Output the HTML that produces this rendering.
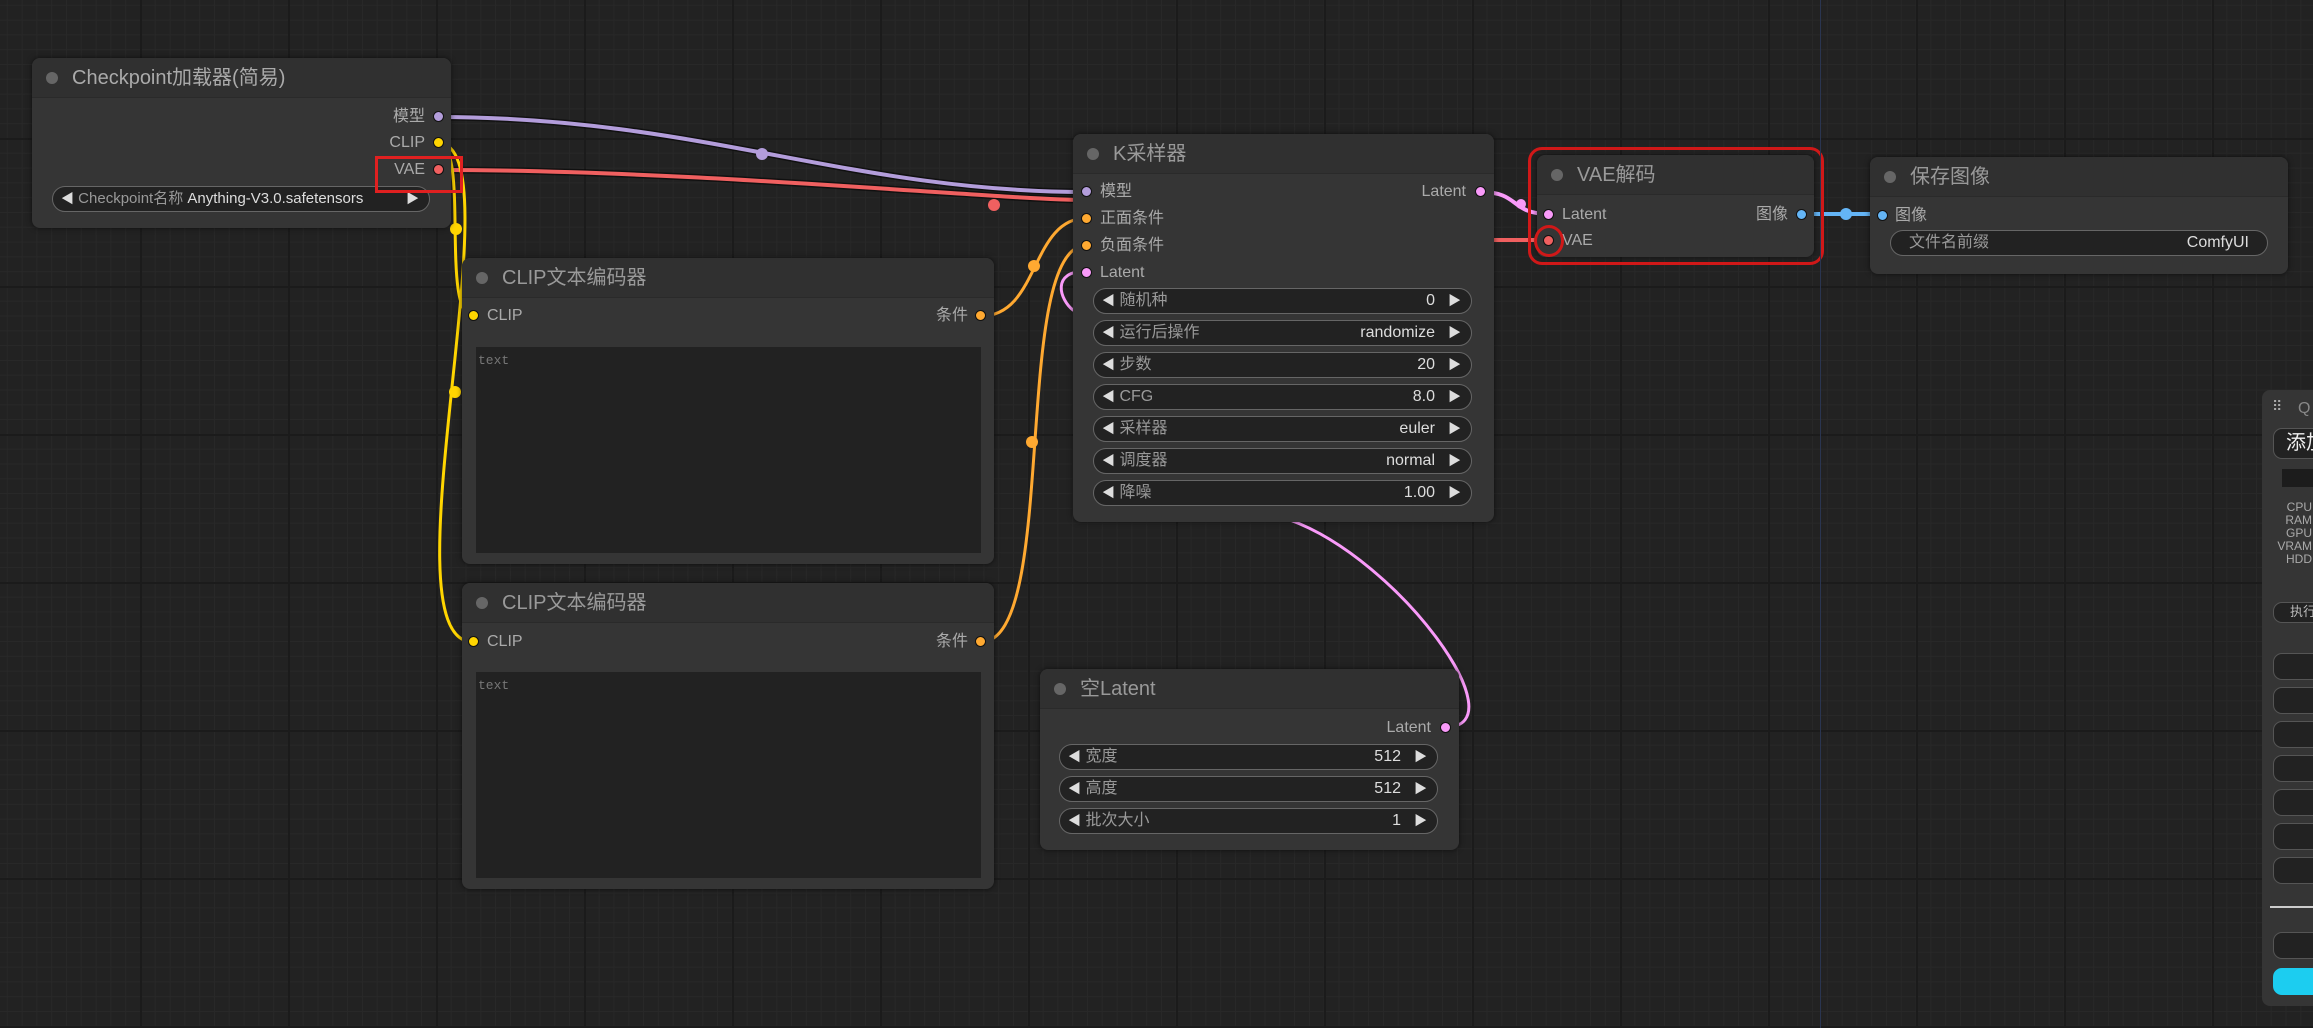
<!DOCTYPE html>
<html><head><meta charset="utf-8"><style>
*{box-sizing:border-box;margin:0;padding:0}
body{width:2313px;height:1028px;overflow:hidden;background:#222;font-family:"Liberation Sans","Noto Sans CJK SC",sans-serif;position:relative;
background-image:linear-gradient(#1b1b1b 2px,transparent 2px),linear-gradient(90deg,#1b1b1b 2px,transparent 2px),linear-gradient(#282828 1px,transparent 1px),linear-gradient(90deg,#282828 1px,transparent 1px);
background-size:148px 148px,148px 148px,14.8px 14.8px,14.8px 14.8px;background-position:-8px -10px}
.node{position:absolute;background:#353535;border-radius:8px;box-shadow:0 0 6px rgba(0,0,0,.6)}
.title{height:40px;background:#303030;border-radius:8px 8px 0 0;border-bottom:1px solid #2a2a2a;color:#999;font-size:20px;line-height:40px;padding-left:40px;position:relative}
.title:before{content:"";position:absolute;left:14px;top:14px;width:12px;height:12px;border-radius:50%;background:#666}
.abs{position:absolute;font-size:16px;color:#aaa;line-height:20px;white-space:nowrap}
.dot{position:absolute;width:11px;height:11px;border-radius:50%;border:1px solid #111}
.w{position:absolute;height:26px;background:#222;border:1.5px solid #666;border-radius:13px;color:#999;font-size:16px;line-height:23px;white-space:nowrap}
.w .l{position:absolute;left:8px}
.w .a{font-size:13px;color:#ddd}
.w .v{position:absolute;right:36px;color:#ddd}
.w .r{position:absolute;right:10px;color:#ddd;font-size:13px}
.ta{position:absolute;background:#222;color:#777;font-family:"Liberation Mono",monospace;font-size:13px;padding:6px 2px}
.pb{position:absolute;left:2273px;width:60px;height:27px;border:1.5px solid #555;border-radius:9px;background:#222}
</style></head><body>
<svg width="2313" height="1028" style="position:absolute;left:0;top:0">
<g fill="none" stroke-linecap="round">
<g stroke="#000" stroke-width="7" opacity=".5">
<path d="M438 117 C700 117 850 192 1087 192"/>
<path d="M438 170 C700 170 1000 200 1087 200"/>
</g>
<path d="M438 117 C700 117 850 192 1087 192" stroke="#b39ddb" stroke-width="4"/>
<path d="M438 170 C700 170 1000 200 1087 200" stroke="#f06060" stroke-width="4"/>
<path d="M1494 240 L1549 240" stroke="#f06060" stroke-width="4"/>
<path d="M438 143 C470 143 440 316 473 316" stroke="#ffd500" stroke-width="3"/>
<path d="M438 143 C520 143 380 642 473 642" stroke="#ffd500" stroke-width="3"/>
<path d="M981 316 C1040 316 1030 218 1087 218" stroke="#ffa931" stroke-width="3"/>
<path d="M981 642 C1060 642 1010 245 1087 245" stroke="#ffa931" stroke-width="3"/>
<path d="M1446 727 C1520 727 1400 560 1290 520" stroke="#f99af9" stroke-width="3"/>
<path d="M1087 271 C1050 271 1060 300 1073 310" stroke="#f99af9" stroke-width="3"/>
<path d="M1481 192 C1520 192 1510 214 1549 214" stroke="#f99af9" stroke-width="4"/>
<path d="M1802 214 L1882 214" stroke="#64b5f6" stroke-width="4"/>
</g>
<g>
<circle cx="762" cy="154" r="6" fill="#b39ddb"/>
<circle cx="994" cy="205" r="6" fill="#f06060"/>
<circle cx="456" cy="229" r="6" fill="#ffd500"/>
<circle cx="455" cy="392" r="6" fill="#ffd500"/>
<circle cx="1034" cy="266" r="6" fill="#ffa931"/>
<circle cx="1032" cy="442" r="6" fill="#ffa931"/>
<circle cx="1846" cy="214" r="6" fill="#64b5f6"/>
<circle cx="1521" cy="204" r="5" fill="#f99af9"/>
</g>
</svg>

<!-- Checkpoint -->
<div class="node" style="left:32px;top:58px;width:419px;height:170px">
<div class="title" style="color:#aaa">Checkpoint加载器(简易)</div>
<div class="abs" style="right:26px;top:49px">模型</div>
<div class="abs" style="right:26px;top:75px">CLIP</div>
<div class="abs" style="right:26px;top:102px">VAE</div>
<div class="dot" style="left:401px;top:53px;background:#b39ddb"></div>
<div class="dot" style="left:401px;top:79px;background:#ffd500"></div>
<div class="dot" style="left:401px;top:106px;background:#f06060"></div>
<div class="w" style="left:20px;top:128px;width:378px;font-size:15px"><span class="l"><span class="a">◀</span> Checkpoint名称 <span style="color:#ddd">Anything-V3.0.safetensors</span></span><span class="r">▶</span></div>
</div>
<div style="position:absolute;left:375px;top:156px;width:88px;height:37px;border:3px solid #e02020"></div>

<!-- CLIP 1 -->
<div class="node" style="left:462px;top:258px;width:532px;height:306px">
<div class="title">CLIP文本编码器</div>
<div class="dot" style="left:6px;top:52px;background:#ffd500"></div>
<div class="abs" style="left:25px;top:48px">CLIP</div>
<div class="abs" style="right:26px;top:48px">条件</div>
<div class="dot" style="left:513px;top:52px;background:#ffa931"></div>
<div class="ta" style="left:14px;top:89px;width:505px;height:206px">text</div>
</div>
<!-- CLIP 2 -->
<div class="node" style="left:462px;top:583px;width:532px;height:306px">
<div class="title">CLIP文本编码器</div>
<div class="dot" style="left:6px;top:53px;background:#ffd500"></div>
<div class="abs" style="left:25px;top:49px">CLIP</div>
<div class="abs" style="right:26px;top:49px">条件</div>
<div class="dot" style="left:513px;top:53px;background:#ffa931"></div>
<div class="ta" style="left:14px;top:89px;width:505px;height:206px">text</div>
</div>

<!-- KSampler -->
<div class="node" style="left:1073px;top:134px;width:421px;height:388px">
<div class="title">K采样器</div>
<div class="dot" style="left:8px;top:52px;background:#b39ddb"></div>
<div class="dot" style="left:8px;top:79px;background:#ffa931"></div>
<div class="dot" style="left:8px;top:106px;background:#ffa931"></div>
<div class="dot" style="left:8px;top:133px;background:#f99af9"></div>
<div class="abs" style="left:27px;top:48px">模型</div>
<div class="abs" style="left:27px;top:75px">正面条件</div>
<div class="abs" style="left:27px;top:102px">负面条件</div>
<div class="abs" style="left:27px;top:129px">Latent</div>
<div class="abs" style="right:28px;top:48px">Latent</div>
<div class="dot" style="left:402px;top:52px;background:#f99af9"></div>
<div class="w" style="left:20px;top:154px;width:379px"><span class="l"><span class="a">◀</span> 随机种</span><span class="v">0</span><span class="r">▶</span></div>
<div class="w" style="left:20px;top:186px;width:379px"><span class="l"><span class="a">◀</span> 运行后操作</span><span class="v">randomize</span><span class="r">▶</span></div>
<div class="w" style="left:20px;top:218px;width:379px"><span class="l"><span class="a">◀</span> 步数</span><span class="v">20</span><span class="r">▶</span></div>
<div class="w" style="left:20px;top:250px;width:379px"><span class="l"><span class="a">◀</span> CFG</span><span class="v">8.0</span><span class="r">▶</span></div>
<div class="w" style="left:20px;top:282px;width:379px"><span class="l"><span class="a">◀</span> 采样器</span><span class="v">euler</span><span class="r">▶</span></div>
<div class="w" style="left:20px;top:314px;width:379px"><span class="l"><span class="a">◀</span> 调度器</span><span class="v">normal</span><span class="r">▶</span></div>
<div class="w" style="left:20px;top:346px;width:379px"><span class="l"><span class="a">◀</span> 降噪</span><span class="v">1.00</span><span class="r">▶</span></div>
</div>

<!-- VAE decode -->
<div class="node" style="left:1537px;top:155px;width:277px;height:102px">
<div class="title">VAE解码</div>
<div class="dot" style="left:6px;top:54px;background:#f99af9"></div>
<div class="dot" style="left:6px;top:80px;background:#f06060"></div>
<div class="abs" style="left:25px;top:50px">Latent</div>
<div class="abs" style="left:25px;top:76px">VAE</div>
<div class="abs" style="right:26px;top:50px">图像</div>
<div class="dot" style="left:259px;top:54px;background:#64b5f6"></div>
</div>
<div style="position:absolute;left:1528px;top:147px;width:296px;height:118px;border:3px solid #d01818;border-radius:14px"></div>
<div style="position:absolute;left:1534px;top:225px;width:30px;height:32px;border:3px solid #d01818;border-radius:50%"></div>

<!-- Save image -->
<div class="node" style="left:1870px;top:157px;width:418px;height:117px">
<div class="title">保存图像</div>
<div class="dot" style="left:7px;top:53px;background:#64b5f6"></div>
<div class="abs" style="left:25px;top:49px">图像</div>
<div class="w" style="left:20px;top:73px;width:378px"><span class="l" style="left:18px">文件名前缀</span><span class="r" style="right:18px;font-size:16px">ComfyUI</span></div>
</div>

<!-- Empty latent -->
<div class="node" style="left:1040px;top:669px;width:419px;height:181px">
<div class="title">空Latent</div>
<div class="abs" style="right:28px;top:49px">Latent</div>
<div class="dot" style="left:400px;top:53px;background:#f99af9"></div>
<div class="w" style="left:19px;top:75px;width:379px"><span class="l"><span class="a">◀</span> 宽度</span><span class="v">512</span><span class="r">▶</span></div>
<div class="w" style="left:19px;top:107px;width:379px"><span class="l"><span class="a">◀</span> 高度</span><span class="v">512</span><span class="r">▶</span></div>
<div class="w" style="left:19px;top:139px;width:379px"><span class="l"><span class="a">◀</span> 批次大小</span><span class="v">1</span><span class="r">▶</span></div>
</div>

<!-- right panel -->
<div style="position:absolute;left:1820px;top:0;width:1px;height:1028px;background:#2a3550"></div>
<div style="position:absolute;left:2262px;top:390px;width:60px;height:616px;background:#353535;border-radius:8px 0 0 8px">
<div style="position:absolute;left:10px;top:8px;color:#aaa;font-size:14px">⠿</div>
<div style="position:absolute;left:36px;top:10px;color:#888;font-size:16px">Q</div>
<div style="position:absolute;left:11px;top:38px;width:60px;height:31px;border:1.5px solid #555;border-radius:9px;background:#222;color:#eee;font-size:20px;line-height:28px;padding-left:12px">添加</div>
<div style="position:absolute;left:20px;top:79px;width:40px;height:18px;background:#1c1c1c"></div>
<div style="position:absolute;left:10px;top:111px;color:#aaa;font-size:12px;line-height:13px;text-align:right;width:40px">CPU<br>RAM<br>GPU<br>VRAM<br>HDD</div>
<div style="position:absolute;left:11px;top:212px;width:60px;height:21px;border:1.5px solid #555;border-radius:9px;background:#222;color:#bbb;font-size:13px;line-height:18px;padding-left:16px">执行</div>
</div>
<div class="pb" style="top:653px"></div>
<div class="pb" style="top:687px"></div>
<div class="pb" style="top:721px"></div>
<div class="pb" style="top:755px"></div>
<div class="pb" style="top:789px"></div>
<div class="pb" style="top:823px"></div>
<div class="pb" style="top:857px"></div>
<div style="position:absolute;left:2270px;top:906px;width:43px;height:2px;background:#ccc"></div>
<div class="pb" style="top:932px"></div>
<div class="pb" style="top:968px;background:#1ccdf0;border-color:#1ccdf0"></div>
</body></html>
